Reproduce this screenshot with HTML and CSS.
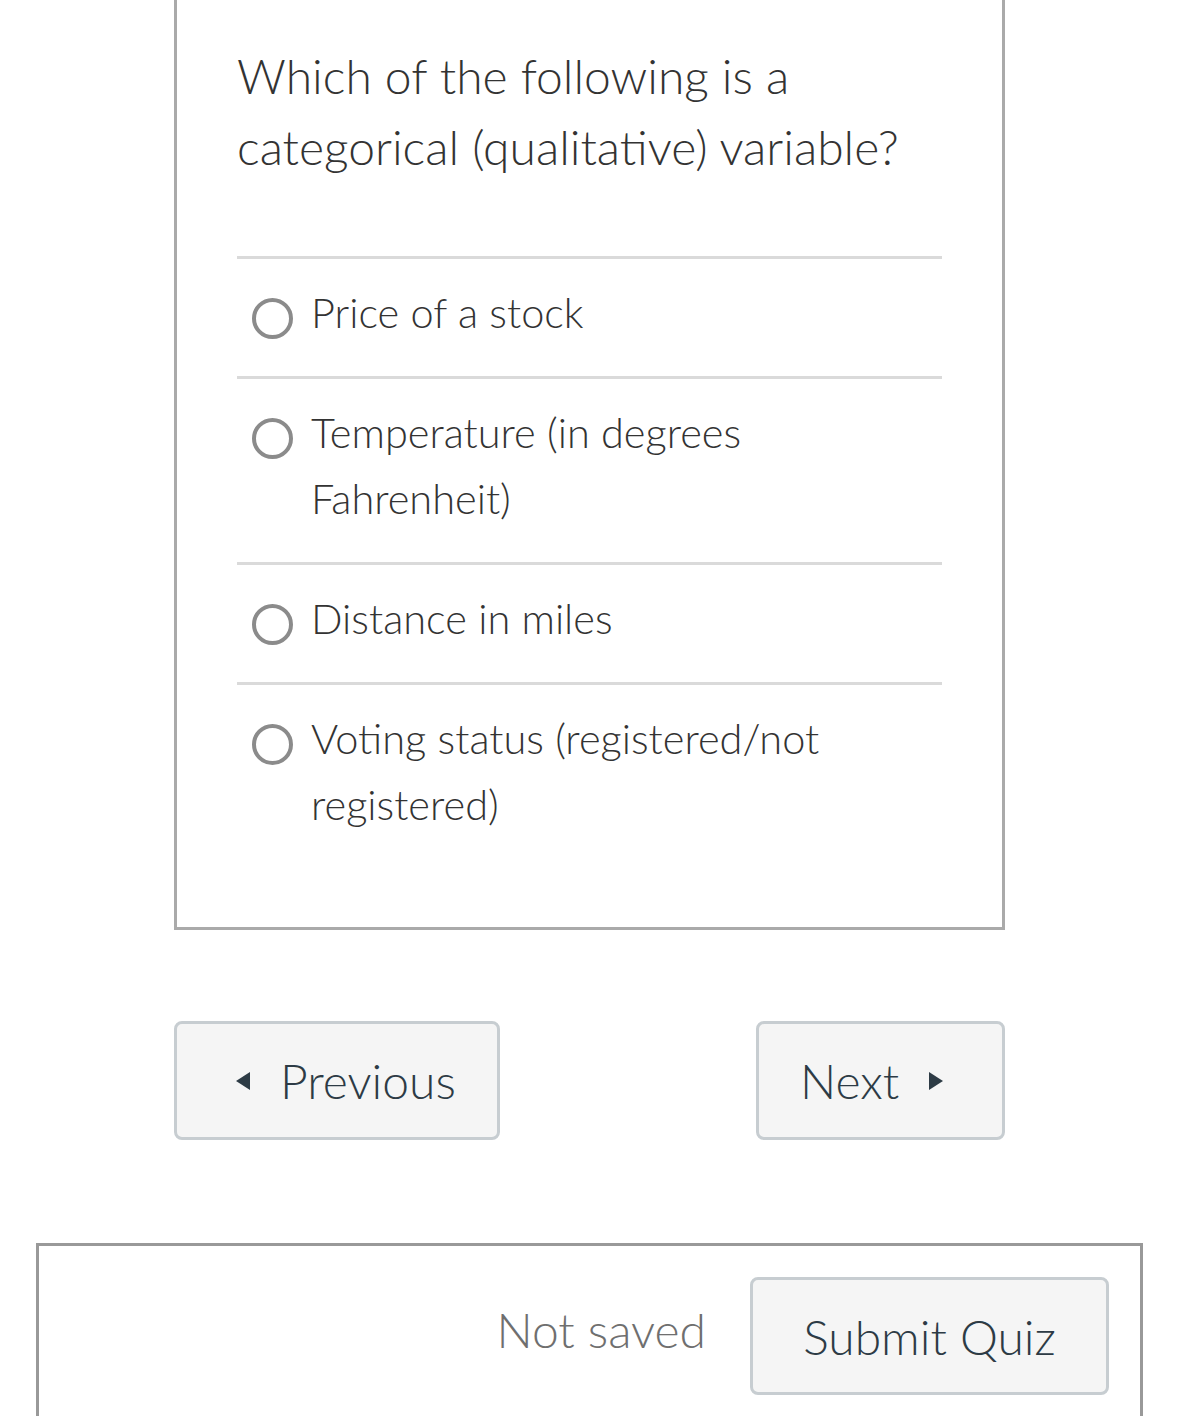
FILE: index.html
```html
<!DOCTYPE html>
<html lang="en">
<head>
    <meta charset="UTF-8">
    <meta name="viewport" content="width=device-width, initial-scale=1.0">
    <title>quiz</title>
    <link rel="stylesheet" href="styles.css">
</head>
<body>
  <div class="question">
    <div class="question_text">Which of the following is a categorical (qualitative) variable?</div>
    <div class="answers">
        <label class="answer"><span class="radio"></span><span class="answer_text">Price of a stock</span></label>
        <label class="answer"><span class="radio"></span><span class="answer_text">Temperature (in degrees Fahrenheit)</span></label>
        <label class="answer"><span class="radio"></span><span class="answer_text">Distance in miles</span></label>
        <label class="answer"><span class="radio"></span><span class="answer_text">Voting status (registered/not registered)</span></label>
    </div>
  </div>

  <div class="nav">
    <button class="nav_btn prev">
        <svg class="arrow" width="14" height="18" viewBox="0 0 14 18"><polygon points="14,0 14,18 0,9"/></svg>
        <span>Previous</span>
    </button>
    <button class="nav_btn next">
        <span>Next</span>
        <svg class="arrow" width="14" height="18" viewBox="0 0 14 18"><polygon points="0,0 0,18 14,9"/></svg>
    </button>
  </div>

  <div class="submit_bar">
    <span class="save_status">Not saved</span>
    <button class="submit_btn">Submit Quiz</button>
  </div>
</body>
</html>
```

FILE: styles.css
```css
*{
  margin:0;
  padding:0;
  box-sizing: border-box;
}
body{
  font-family: "Lato Light", Lato, "Open Sans", sans-serif;
  font-weight: 300;
  color: #333;
  background: #fff;
}
.question{
  width: 831px;
  margin: 0 auto;
  border: 3px solid #aaa;
  border-top: none;
  padding: 40px 60px 59px 60px;
}
.question_text{
  font-size: 48px;
  line-height: 71px;
  margin-bottom: 74px;
}
.answer{
  display: flex;
  flex-flow: row nowrap;
  border-top: 3px solid #dadada;
  padding: 20px 0 31px 15px;
}
.radio{
  width: 41px;
  height: 41px;
  flex-shrink: 0;
  border: 4px solid #8b8b8b;
  border-radius: 50%;
  margin-top: 19px;
  margin-right: 18px;
}
.answer_text{
  font-size: 41.5px;
  line-height: 66px;
}
.nav{
  width: 831px;
  margin: 91px auto 0;
  display: flex;
  justify-content: space-between;
}
.nav_btn, .submit_btn{
  font: inherit;
  font-size: 48px;
  color: #2d3b45;
  background: #f5f5f5;
  border: 3px solid #c7cdd1;
  border-radius: 8px;
  display: flex;
  align-items: center;
}
.nav_btn{
  height: 119px;
}
.arrow{
  fill: #2d3b45;
  flex-shrink: 0;
}
.prev{
  width: 326px;
  padding-left: 59px;
}
.prev .arrow{
  margin-right: 30px;
}
.next{
  width: 249px;
  padding-left: 41px;
}
.next .arrow{
  margin-left: 30px;
}
.submit_bar{
  width: 1107px;
  margin: 103px auto 0;
  border: 3px solid #999;
  border-bottom: none;
  padding: 31px 31px 100px;
  display: flex;
  justify-content: flex-end;
  align-items: center;
  gap: 44px;
}
.save_status{
  font-size: 48px;
  color: #6f6f6f;
  margin-top: -14px;
}
.submit_btn{
  width: 359px;
  height: 118px;
  justify-content: center;
}
```
